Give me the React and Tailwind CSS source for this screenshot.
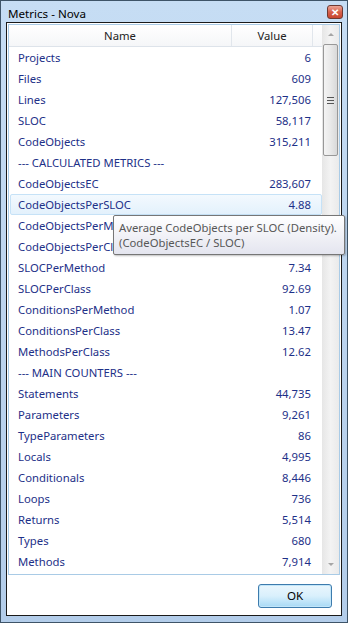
import React from "react";

const rows = [
  ["Projects", "6"],
  ["Files", "609"],
  ["Lines", "127,506"],
  ["SLOC", "58,117"],
  ["CodeObjects", "315,211"],
  ["--- CALCULATED METRICS ---", ""],
  ["CodeObjectsEC", "283,607"],
  ["CodeObjectsPerSLOC", "4.88", true],
  ["CodeObjectsPerMethod", "35.84"],
  ["CodeObjectsPerClass", "452.32"],
  ["SLOCPerMethod", "7.34"],
  ["SLOCPerClass", "92.69"],
  ["ConditionsPerMethod", "1.07"],
  ["ConditionsPerClass", "13.47"],
  ["MethodsPerClass", "12.62"],
  ["--- MAIN COUNTERS ---", ""],
  ["Statements", "44,735"],
  ["Parameters", "9,261"],
  ["TypeParameters", "86"],
  ["Locals", "4,995"],
  ["Conditionals", "8,446"],
  ["Loops", "736"],
  ["Returns", "5,514"],
  ["Types", "680"],
  ["Methods", "7,914"],
];

function Row({ name, value, hot }) {
  return (
    <div
      className={
        "flex h-[21px] shrink-0 items-center ml-[1px] w-[312px] " +
        (hot
          ? "rounded-[2px] border border-[#c6e2f7] bg-gradient-to-b from-[#f3f9fe] to-[#e3f1fc]"
          : "border border-transparent")
      }
    >
      <div className="w-[221px] pl-[7px] whitespace-nowrap overflow-hidden">{name}</div>
      <div className="w-[81px] pr-[2px] text-right">{value}</div>
    </div>
  );
}

function ScrollBar() {
  return (
    <div className="w-[17px] shrink-0 flex flex-col bg-gradient-to-r from-[#e6e6e6] via-[#f3f3f3] to-[#eaeaea]">
      <div className="h-[19px] flex items-center justify-center">
        <div className="w-0 h-0 border-x-[3px] border-x-transparent border-b-[3px] border-b-[#a6a6a6]" />
      </div>
      <div className="mx-[1px] h-[112px] rounded-[2px] border border-[#989898] bg-gradient-to-r from-[#f4f4f4] via-[#e9e9e9] to-[#d9d9d9] flex flex-col items-center justify-center gap-[2px]">
        <div className="w-[7px] h-[1px] bg-[#555]" />
        <div className="w-[7px] h-[1px] bg-[#555]" />
        <div className="w-[7px] h-[1px] bg-[#555]" />
      </div>
      <div className="flex-1" />
      <div className="h-[19px] flex items-center justify-center">
        <div className="w-0 h-0 border-x-[3px] border-x-transparent border-t-[3px] border-t-[#a6a6a6]" />
      </div>
    </div>
  );
}

export default function App() {
  return (
    <div
      className="relative w-[348px] h-[623px] flex flex-col border border-[#3e5468] bg-gradient-to-b from-[#c6ddf4] via-[#bcd4ee] to-[#b3cdea] px-[5px] pb-[6px] text-[11.3px] leading-[15px]"
      style={{ fontFamily: '"Noto Sans", "Open Sans", sans-serif' }}
    >
      <div className="h-[21px] shrink-0 flex items-center justify-between pl-[2px]">
        <span className="text-black text-[11.6px] pt-[3px]">Metrics - Nova</span>
        <div className="mr-[-1px] mt-[1px] w-[16px] h-[14px] rounded-[3px] border border-[#6e3a33] bg-gradient-to-b from-[#eba596] via-[#d6604c] to-[#c8452f] flex items-center justify-center">
          <span className="text-white text-[10px] leading-[10px] font-bold">✕</span>
        </div>
      </div>

      <div className="flex-1 flex flex-col border border-[#1a1a1a] bg-white">
        <div className="mt-[1px] mx-[1px] h-[551px] shrink-0 flex border border-[#a9cbe6] bg-white overflow-hidden">
          <div className="w-[313px] flex flex-col text-[#1d3088]">
            <div className="h-[22px] shrink-0 flex items-stretch bg-gradient-to-b from-[#ffffff] to-[#f5f6f8] border-b border-[#dde3ea] text-[#222]">
              <div className="w-[223px] flex items-center justify-center border-r border-[#e1e6ec]">Name</div>
              <div className="w-[81px] flex items-center justify-center border-r border-[#e1e6ec]">Value</div>
              <div className="flex-1" />
            </div>
            {rows.map(([n, v, hot]) => (
              <Row key={n} name={n} value={v} hot={hot} />
            ))}
          </div>
          <div className="flex-1" />
          <ScrollBar />
        </div>
        <div className="flex-1 flex items-center justify-end pr-[9px] pt-[1px]">
          <button className="w-[74px] h-[24px] rounded-[3px] border border-[#3d7bad] bg-gradient-to-b from-[#eaf6fd] via-[#d9f0fc] to-[#a7d9f5] shadow-[inset_0_0_0_1px_#c2e6f9] text-black text-[11.6px]">
            OK
          </button>
        </div>
      </div>

      <div className="absolute left-[112px] top-[214px] w-[232px] h-[40px] border border-[#767676] rounded-[2px] bg-gradient-to-b from-[#ffffff] to-[#e4e5ef] px-[5px] pt-[4px] text-[#575757] shadow-[1px_1px_2px_rgba(0,0,0,0.25)] whitespace-nowrap">
        <div>Average CodeObjects per SLOC (Density).</div>
        <div>(CodeObjectsEC / SLOC)</div>
      </div>
    </div>
  );
}
